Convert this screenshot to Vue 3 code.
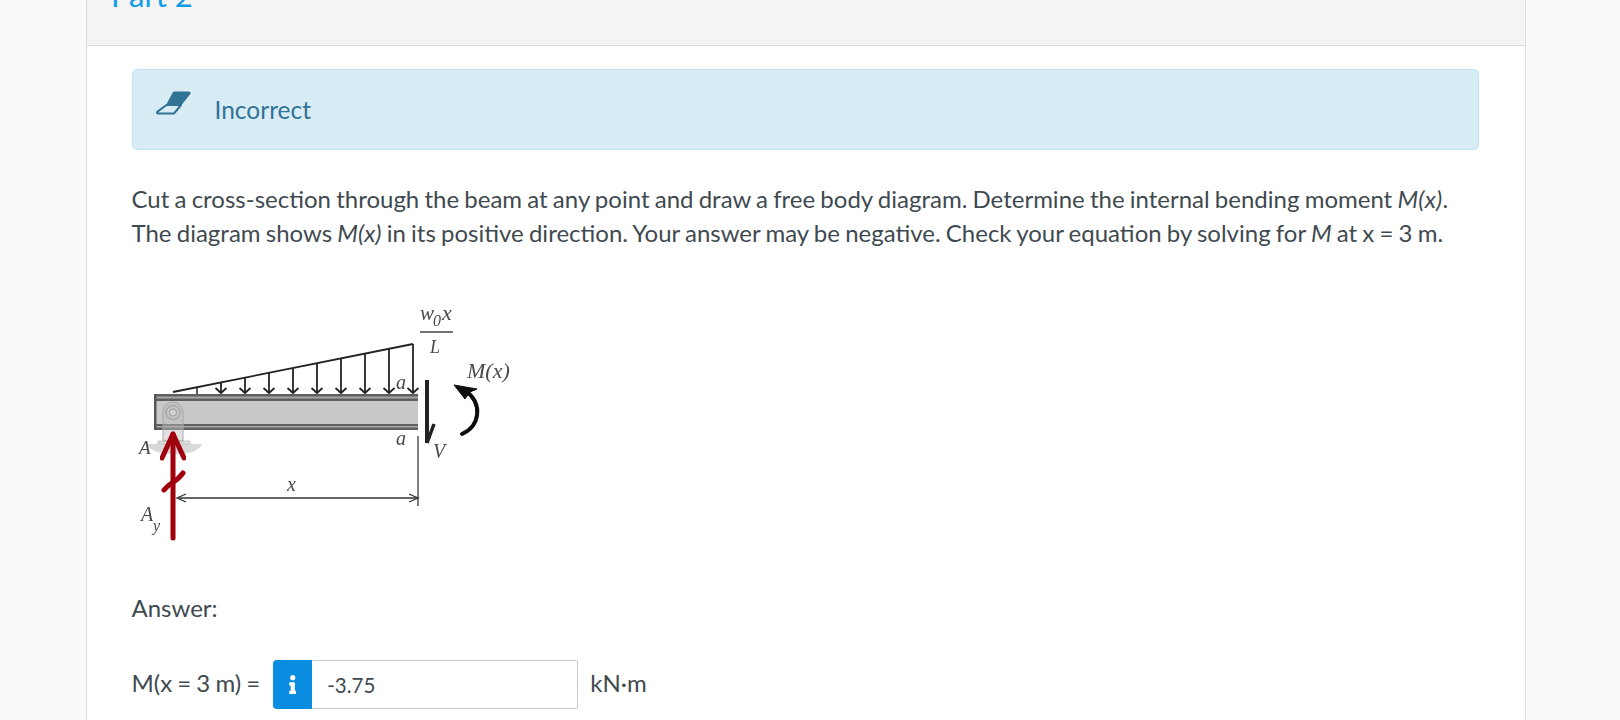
<script setup>
const arrows = [221, 245, 269, 293, 317, 341, 365, 389, 413]
const loadTop = (x) => 391 - ((x - 173) * 48) / 240
</script>

<template>
  <main class="panel">
    <header class="head"><h2 class="part">Part 2</h2></header>
    <section class="body">
      <div class="alert">
        <svg class="eraser" width="36" height="24" viewBox="0 0 36 24" aria-hidden="true">
          <path d="M17.5 1H33c1 0 1.5 1 1 1.8L25 14H10.500z" fill="#317394" stroke="#317394" stroke-linejoin="round" />
          <path d="M10.500 14H25l-7 8.500H2c-1 0-1.300-.9-.8-1.600z" fill="none" stroke="#317394" stroke-width="2" stroke-linejoin="round" />
        </svg>
        <span>Incorrect</span>
      </div>
      <p class="prompt">
        Cut a cross-section through the beam at any point and draw a free body diagram. Determine the internal bending moment <em class="wide">M(x)</em>.<br />
        The diagram shows <em>M(x)</em> in its positive direction. Your answer may be negative. Check your equation by solving for <em>M</em> at x = 3 m.
      </p>
      <svg class="diagram" width="400" height="260" viewBox="132 290 400 260" role="img">
        <defs>
          <filter id="soft" x="-5%" y="-5%" width="110%" height="110%"><feGaussianBlur stdDeviation="0.7" /></filter>
        </defs>
        <g filter="url(#soft)">
          <path d="M146 443h57c-6 7-12 10-28 10s-24-3-29-10z" fill="#d8d8d8" />
          <path d="M158 440h32v3h-32z" fill="#dedede" stroke="#c4c4c4" />
          <rect x="154" y="393" width="264" height="35" fill="#c9c9c9" />
          <rect x="154" y="393" width="264" height="7" fill="#5f5f5f" />
          <rect x="154" y="395.500" width="264" height="2" fill="#a8a8a8" />
          <rect x="154" y="423" width="264" height="6" fill="#5f5f5f" />
          <rect x="154" y="425" width="264" height="1.500" fill="#a8a8a8" />
          <rect x="154" y="393" width="2.500" height="36" fill="#555" />
          <path d="M163 440V411a10 10 0 0 1 20 0v29z" fill="#bdbdbd" fill-opacity=".45" stroke="#a8a8a8" />
          <circle cx="173" cy="411.500" r="7" fill="none" stroke="#aaa" stroke-width="1.500" />
          <circle cx="173" cy="411.500" r="3.500" fill="#d4d4d4" stroke="#999" />
          <path d="M173 391L413 343" stroke="#222" stroke-width="1.800" fill="none" />
          <path d="M197 386V393" stroke="#222" stroke-width="1.500" />
          <g v-for="x in arrows" :key="x" fill="none" stroke="#222" stroke-width="1.800">
            <path :d="`M${x} ${loadTop(x)}V392`" />
            <path :d="`M${x - 5.500} 387L${x} 392L${x + 5.500} 387`" />
          </g>
          <path d="M418 435V505" stroke="#555" stroke-width="1.500" />
          <path d="M179 497H417" stroke="#333" stroke-width="1.500" />
          <path d="M186 493L177 497L186 501M409 493L418 497L409 501" fill="none" stroke="#333" stroke-width="1.300" />
          <path d="M427 379V442" stroke="#222" stroke-width="4" />
          <path d="M427 442L434 423" stroke="#222" stroke-width="3.500" />
          <path d="M462 433C480 425 483 403 466 390" fill="none" stroke="#111" stroke-width="4" stroke-linecap="round" />
          <path d="M454 384L477 388L470 391L465 398z" fill="#111" stroke="#111" stroke-linejoin="round" />
          <path d="M420 331H453" stroke="#444" stroke-width="1.500" />
          <g class="serif">
            <text x="420" y="319" font-size="21">w</text>
            <text x="433" y="325" font-size="16">0</text>
            <text x="442" y="319" font-size="22">x</text>
            <text x="430" y="352" font-size="18">L</text>
            <text x="467" y="377" font-size="22">M(x)</text>
            <text x="396" y="388" font-size="20">a</text>
            <text x="396" y="444" font-size="20">a</text>
            <text x="433" y="457" font-size="20">V</text>
            <text x="287" y="490" font-size="20">x</text>
            <text x="139" y="453" font-size="19">A</text>
            <text x="141" y="520" font-size="20">A</text>
            <text x="153" y="530" font-size="16">y</text>
          </g>
        </g>
        <g fill="none" stroke="#a0060d" stroke-linecap="round" stroke-width="5" filter="url(#soft)">
          <path d="M173 537V433" />
          <path d="M162 457L173 433L184 457" stroke-linejoin="round" />
          <path d="M164 489C170 481 176 482 183 472" />
        </g>
      </svg>
      <p class="answer-label">Answer:</p>
      <div class="answer">
        <span class="raised">M(x = 3 m) =</span>
        <div class="field">
          <span class="info">
            <svg width="7.5" height="19" viewBox="0 0 192 512" aria-hidden="true">
              <path fill="#fff" d="M20 424.229h20V279.771H20c-11.046 0-20-8.954-20-20V212c0-11.046 8.954-20 20-20h112c11.046 0 20 8.954 20 20v212.229h20c11.046 0 20 8.954 20 20V492c0 11.046-8.954 20-20 20H20c-11.046 0-20-8.954-20-20v-47.771c0-11.046 8.954-20 20-20zM96 0C56.235 0 24 32.235 24 72s32.235 72 72 72 72-32.235 72-72S135.764 0 96 0z" />
            </svg>
          </span>
          <span class="value">-3.75</span>
        </div>
        <span class="raised">kN·m</span>
      </div>
    </section>
  </main>
</template>

<style>
html, body { margin: 0; height: 720px; overflow: hidden; background: #fafafa; }
</style>

<style scoped>
.panel {
  box-sizing: border-box;
  width: 1440px;
  height: 720px;
  margin-left: 86px;
  background: #fff;
  border-left: 1.500px solid #dcdcdc;
  border-right: 1.500px solid #dcdcdc;
  font-family: Lato, sans-serif;
  color: #3f4a50;
  overflow: hidden;
}
.head {
  box-sizing: border-box;
  height: 46px;
  background: #f4f4f4;
  border-bottom: 1.500px solid #dfdfdf;
  overflow: hidden;
}
.part {
  margin: -25px 0 0 24px;
  font-weight: 400;
  font-size: 31px;
  line-height: 40px;
  color: #0f9be8;
}
.body {
  padding: 23px 46px 0 44.500px;
}
.alert {
  box-sizing: border-box;
  display: flex;
  align-items: center;
  height: 81px;
  padding-left: 23px;
  background: #d8ecf6;
  border: 1px solid #bfe5f0;
  border-radius: 5px;
  color: #317394;
  font-size: 24.500px;
}
.eraser { margin: -14px 23px 0 0; }
.prompt {
  margin: 32px 0 0;
  font-size: 24px;
  line-height: 34px;
  white-space: nowrap;
  word-spacing: -0.95px;
}
.wide { letter-spacing: 0.2px; }
.diagram { display: block; margin-top: 41px; }
.serif { font-family: "Liberation Serif", serif; font-style: italic; fill: #4a4a4a; }
.answer-label { margin: 41px 0 0; font-size: 24px; line-height: 32px; }
.answer {
  display: flex;
  align-items: center;
  margin-top: 36px;
  font-size: 24px;
  word-spacing: -1px;
}
.raised { padding-bottom: 4px; }
.field {
  box-sizing: border-box;
  display: flex;
  width: 305px;
  height: 49px;
  margin: 0 12px 0 13px;
  background: #fff;
  border: 1px solid #c9cccc;
  border-radius: 4px 2px 2px 4px;
}
.info {
  display: flex;
  align-items: center;
  justify-content: center;
  width: 39px;
  margin: -1px 0 -1px -1px;
  background: #0a8de0;
  border-radius: 4px 0 0 4px;
}
.value { padding-left: 15px; font-size: 20.500px; line-height: 49px; }
</style>
